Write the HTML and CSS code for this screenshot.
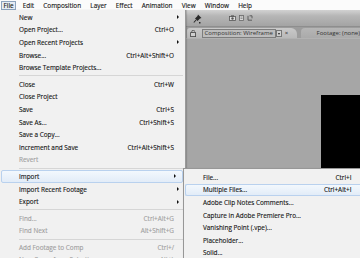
FILE: index.html
```html
<!DOCTYPE html>
<html>
<head>
<meta charset="utf-8">
<link rel="stylesheet" href="styles.css">
</head>
<body>
<div class="menubar">
  <span class="mb-item active">File</span>
  <span class="mb-item">Edit</span>
  <span class="mb-item">Composition</span>
  <span class="mb-item">Layer</span>
  <span class="mb-item">Effect</span>
  <span class="mb-item">Animation</span>
  <span class="mb-item">View</span>
  <span class="mb-item">Window</span>
  <span class="mb-item">Help</span>
</div>
<div class="workspace">
  <div class="left-col"></div>
  <div class="right-col">
    <div class="toolbar">
      <svg class="tool-pin" width="9" height="10" viewBox="0 0 9 10">
        <path d="M5 0.5 L8.5 4 L7 4.5 L4.5 7 L2 4.5 L4.5 2 Z" fill="#2a2a2a"/>
        <path d="M3 6 L0.8 8.5" stroke="#2a2a2a" stroke-width="1.1"/>
        <rect x="6" y="8" width="1.5" height="1.5" fill="#2a2a2a"/>
      </svg>
      <div class="tool-group">
        <svg width="7" height="6" viewBox="0 0 7 6"><rect x="0.5" y="1.5" width="6" height="4" fill="#e0e0e0" stroke="#555" stroke-width="0.8"/><circle cx="3.5" cy="3.5" r="1.2" fill="#555"/><rect x="2" y="0.4" width="3" height="1.2" fill="#555"/></svg>
        <svg width="5" height="6" viewBox="0 0 5 6"><rect x="0.5" y="0.5" width="4" height="5" fill="#d8d8d8" stroke="#666" stroke-width="0.8"/><path d="M1.5 2h2M1.5 3.5h2" stroke="#666" stroke-width="0.6"/></svg>
        <svg width="6" height="6" viewBox="0 0 6 6"><path d="M1 0.8v4.4h4" fill="none" stroke="#555" stroke-width="0.9"/><path d="M2.5 0.8h2.5v2.5" fill="none" stroke="#555" stroke-width="0.9"/></svg>
      </div>
    </div>
    <div class="tabs">
      <div class="tab comp-tab">
        <svg class="tab-icon" width="7" height="7" viewBox="0 0 7 7"><rect x="0.6" y="2.6" width="5" height="4" fill="#d0d0d0" stroke="#444" stroke-width="0.8"/><path d="M1.8 2.6V1.6a1.4 1.4 0 0 1 2.8 0" fill="none" stroke="#444" stroke-width="0.8"/></svg>
        <span class="tab-label">Composition: Wireframe</span>
        <span class="tab-drop"></span>
        <span class="tab-close">×</span>
      </div>
      <div class="tab foot-tab">
        <span class="foot-label">Footage: (none)</span>
      </div>
    </div>
    <div class="viewer">
      <div class="comp"></div>
    </div>
  </div>
</div>

<div class="menu file-menu">
  <div class="mi"><span>New</span><span></span><span class="arrow"></span></div>
  <div class="mi"><span>Open Project...</span><span class="sc">Ctrl+O</span><span></span></div>
  <div class="mi"><span>Open Recent Projects</span><span></span><span class="arrow"></span></div>
  <div class="mi"><span>Browse...</span><span class="sc">Ctrl+Alt+Shift+O</span><span></span></div>
  <div class="mi"><span>Browse Template Projects...</span><span></span><span></span></div>
  <div class="sep"></div>
  <div class="mi"><span>Close</span><span class="sc">Ctrl+W</span><span></span></div>
  <div class="mi"><span>Close Project</span><span></span><span></span></div>
  <div class="mi"><span>Save</span><span class="sc">Ctrl+S</span><span></span></div>
  <div class="mi"><span>Save As...</span><span class="sc">Ctrl+Shift+S</span><span></span></div>
  <div class="mi"><span>Save a Copy...</span><span></span><span></span></div>
  <div class="mi"><span>Increment and Save</span><span class="sc">Ctrl+Alt+Shift+S</span><span></span></div>
  <div class="mi disabled"><span>Revert</span><span></span><span></span></div>
  <div class="sep"></div>
  <div class="mi hl"><span>Import</span><span></span><span class="arrow"></span></div>
  <div class="mi"><span>Import Recent Footage</span><span></span><span class="arrow"></span></div>
  <div class="mi"><span>Export</span><span></span><span class="arrow"></span></div>
  <div class="sep"></div>
  <div class="mi disabled"><span>Find...</span><span class="sc">Ctrl+Alt+G</span><span></span></div>
  <div class="mi disabled"><span>Find Next</span><span class="sc">Alt+Shift+G</span><span></span></div>
  <div class="sep"></div>
  <div class="mi disabled"><span>Add Footage to Comp</span><span class="sc">Ctrl+/</span><span></span></div>
  <div class="mi disabled last"><span>New Comp from Selection</span><span class="sc">Alt+\</span><span></span></div>
</div>

<div class="menu submenu">
  <div class="mi"><span>File...</span><span class="sc">Ctrl+I</span><span></span></div>
  <div class="mi hl"><span>Multiple Files...</span><span class="sc">Ctrl+Alt+I</span><span></span></div>
  <div class="mi"><span>Adobe Clip Notes Comments...</span><span></span><span></span></div>
  <div class="mi"><span>Capture in Adobe Premiere Pro...</span><span></span><span></span></div>
  <div class="mi"><span>Vanishing Point (.vpe)...</span><span></span><span></span></div>
  <div class="mi"><span>Placeholder...</span><span></span><span></span></div>
  <div class="mi"><span>Solid...</span><span></span><span></span></div>
</div>
</body>
</html>
```

FILE: styles.css
```css
html, body {
  margin: 0;
  padding: 0;
}
body {
  width: 360px;
  height: 258px;
  overflow: hidden;
  position: relative;
  font-family: "Open Sans", "Noto Sans", sans-serif;
  color: #111;
  background: #a6a6a6;
}

/* menu bar */
.menubar {
  height: 10px;
  display: flex;
  align-items: stretch;
  background: #fbfbfb;
  font-size: 6.4px;
  line-height: 9px;
  padding-left: 1px;
  box-sizing: border-box;
  -webkit-text-stroke: 0.12px #111;
}
.mb-item {
  padding: 0 3.6px;
  height: 9px;
  margin-top: 0.5px;
  border: 1px solid transparent;
  box-sizing: border-box;
  display: flex;
  align-items: center;
}
.mb-item.active {
  border-color: #8ea4be;
  background: #e6ecf4;
  padding: 0 1.5px;
  margin-right: 2px;
}

/* workspace */
.workspace {
  display: flex;
  height: 248px;
}
.left-col {
  width: 185px;
  background: #f0f0f0;
}
.right-col {
  flex: 1;
  display: flex;
  flex-direction: column;
  background: #a6a6a6;
}
.toolbar {
  height: 17px;
  background: linear-gradient(#d2d2d2 0%, #b6b6b6 35%, #a2a2a2 100%);
  display: flex;
  align-items: center;
  padding-left: 8px;
  gap: 27px;
  box-shadow: inset 0 -1px 0 #8e8e8e;
}
.tool-pin {
  margin-top: 1px;
}
.tool-group {
  display: flex;
  align-items: center;
  gap: 3px;
  margin-top: -1px;
}
.tabs {
  height: 11px;
  background: #9c9c9c;
  display: flex;
  align-items: flex-end;
  padding-left: 2px;
  gap: 2px;
}
.tab {
  height: 10px;
  display: flex;
  align-items: center;
  box-sizing: border-box;
}
.comp-tab {
  width: 110px;
  background: linear-gradient(#c9c9c9, #b9b9b9);
  border-radius: 3px 6px 0 0;
  padding-left: 3px;
  gap: 2px;
}
.tab-icon {
  margin-right: 3px;
}
.tab-label {
  font-size: 6px;
  line-height: 7px;
  height: 7px;
  padding: 0 2px;
  border: 0.6px solid #7d7d7d;
  background: #bdbdbd;
  color: #333;
  white-space: nowrap;
}
.tab-drop {
  width: 6px;
  height: 7px;
  box-sizing: border-box;
  border: 0.6px solid #777;
  background: #cfcfcf;
  position: relative;
  margin-left: -2px;
}
.tab-drop::after {
  content: "";
  position: absolute;
  left: 1.2px;
  top: 2.2px;
  border-left: 1.6px solid transparent;
  border-right: 1.6px solid transparent;
  border-top: 2.2px solid #222;
}
.tab-close {
  font-size: 6px;
  line-height: 6px;
  color: #222;
  margin-left: 1px;
}
.foot-tab {
  flex: 1;
  background: linear-gradient(#b6b6b6, #aaaaaa);
  border-radius: 4px 0 0 0;
  padding-left: 16px;
  margin-left: 2px;
}
.foot-label {
  font-size: 6px;
  color: #333;
  white-space: nowrap;
}
.viewer {
  flex: 1;
  display: flex;
  justify-content: flex-end;
  padding-top: 56px;
  background: #a6a6a6;
  border-top: 1px solid #b2b2b2;
}
.comp {
  width: 39px;
  background: #000;
}

/* menus */
.menu {
  position: absolute;
  background: #f1f1f1;
  font-size: 6.4px;
  box-sizing: border-box;
  -webkit-text-stroke: 0.12px currentColor;
}
.file-menu {
  left: 0;
  top: 10px;
  width: 186px;
  height: 260px;
  padding-top: 1px;
  border-right: 1px solid #9a9a9a;
  box-shadow: 1px 0 1px rgba(0,0,0,0.15);
}
.submenu {
  left: 183px;
  top: 168px;
  width: 181px;
  height: 100px;
  padding-top: 2px;
  border: 1px solid #979797;
  box-shadow: 1px 1px 2px rgba(0,0,0,0.2);
}
.mi {
  height: 12.6px;
  display: grid;
  grid-template-columns: 1fr auto 11px;
  align-items: center;
  padding-left: 19px;
  white-space: nowrap;
  box-sizing: border-box;
}
.mi.last {
  align-items: end;
  height: 10px;
}
.submenu .mi {
  grid-template-columns: 1fr auto 11.5px;
}
.mi .sc {
  text-align: right;
}
.mi.disabled {
  color: #9e9e9e;
}
.mi.hl {
  background: linear-gradient(#f3f8fd, #e2ecf8);
  border: 1px solid #b9d1ee;
  border-radius: 2px;
  margin: 0 2px 0 1px;
  padding-left: 17px;
}
.submenu .mi.hl {
  margin: 0 0 0 1px;
  padding-left: 17px;
  border-right: none;
}
.arrow {
  width: 0;
  height: 0;
  border-top: 2px solid transparent;
  border-bottom: 2px solid transparent;
  border-left: 2.5px solid #111;
  justify-self: start;
  margin-left: 2.5px;
}
.sep {
  height: 1px;
  margin: 1.5px 2px 1.5px 19px;
  background: #d6d6d6;
}
```
